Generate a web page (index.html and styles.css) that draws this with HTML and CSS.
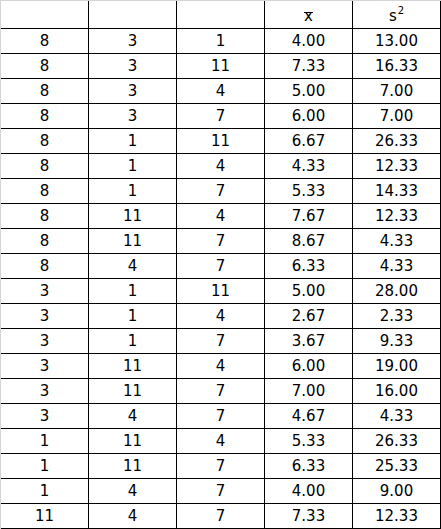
FILE: index.html
```html
<!DOCTYPE html>
<html>
<head>
<meta charset="utf-8">
<link rel="stylesheet" href="styles.css">
</head>
<body>
<div class="sheet">
  <div class="cell head"></div>
  <div class="cell head"></div>
  <div class="cell head"></div>
  <div class="cell head"><span class="xbar">x</span></div>
  <div class="cell head">s<sup class="sq">2</sup></div>

  <div class="cell">8</div><div class="cell">3</div><div class="cell">1</div><div class="cell">4.00</div><div class="cell">13.00</div>
  <div class="cell">8</div><div class="cell">3</div><div class="cell">11</div><div class="cell">7.33</div><div class="cell">16.33</div>
  <div class="cell">8</div><div class="cell">3</div><div class="cell">4</div><div class="cell">5.00</div><div class="cell">7.00</div>
  <div class="cell">8</div><div class="cell">3</div><div class="cell">7</div><div class="cell">6.00</div><div class="cell">7.00</div>
  <div class="cell">8</div><div class="cell">1</div><div class="cell">11</div><div class="cell">6.67</div><div class="cell">26.33</div>
  <div class="cell">8</div><div class="cell">1</div><div class="cell">4</div><div class="cell">4.33</div><div class="cell">12.33</div>
  <div class="cell">8</div><div class="cell">1</div><div class="cell">7</div><div class="cell">5.33</div><div class="cell">14.33</div>
  <div class="cell">8</div><div class="cell">11</div><div class="cell">4</div><div class="cell">7.67</div><div class="cell">12.33</div>
  <div class="cell">8</div><div class="cell">11</div><div class="cell">7</div><div class="cell">8.67</div><div class="cell">4.33</div>
  <div class="cell">8</div><div class="cell">4</div><div class="cell">7</div><div class="cell">6.33</div><div class="cell">4.33</div>
  <div class="cell">3</div><div class="cell">1</div><div class="cell">11</div><div class="cell">5.00</div><div class="cell">28.00</div>
  <div class="cell">3</div><div class="cell">1</div><div class="cell">4</div><div class="cell">2.67</div><div class="cell">2.33</div>
  <div class="cell">3</div><div class="cell">1</div><div class="cell">7</div><div class="cell">3.67</div><div class="cell">9.33</div>
  <div class="cell">3</div><div class="cell">11</div><div class="cell">4</div><div class="cell">6.00</div><div class="cell">19.00</div>
  <div class="cell">3</div><div class="cell">11</div><div class="cell">7</div><div class="cell">7.00</div><div class="cell">16.00</div>
  <div class="cell">3</div><div class="cell">4</div><div class="cell">7</div><div class="cell">4.67</div><div class="cell">4.33</div>
  <div class="cell">1</div><div class="cell">11</div><div class="cell">4</div><div class="cell">5.33</div><div class="cell">26.33</div>
  <div class="cell">1</div><div class="cell">11</div><div class="cell">7</div><div class="cell">6.33</div><div class="cell">25.33</div>
  <div class="cell">1</div><div class="cell">4</div><div class="cell">7</div><div class="cell">4.00</div><div class="cell">9.00</div>
  <div class="cell">11</div><div class="cell">4</div><div class="cell">7</div><div class="cell">7.33</div><div class="cell">12.33</div>
</div>
</body>
</html>
```

FILE: styles.css
```css
html, body {
  margin: 0;
  padding: 0;
  background: #ffffff;
}

.sheet {
  width: 440px;
  border-top: 1px solid #d4d4d4;
  border-left: 1px solid #d4d4d4;
  display: grid;
  grid-template-columns: repeat(5, 88px);
  grid-template-rows: 28px;
  grid-auto-rows: 25px;
  font-family: "DejaVu Sans", sans-serif;
  font-size: 15px;
  color: #000000;
}

.cell {
  box-sizing: border-box;
  border-right: 1px solid #000000;
  border-bottom: 1px solid #000000;
  text-align: center;
  line-height: 23px;
  padding-top: 1px;
  white-space: nowrap;
  overflow: hidden;
}

.cell.head {
  padding-top: 3px;
  line-height: 24px;
}

.xbar {
  position: relative;
  display: inline-block;
}

.xbar::after {
  content: "";
  position: absolute;
  left: 0;
  right: 0;
  top: 8px;
  height: 1px;
  background: #000000;
}

.sq {
  font-size: 10px;
  line-height: 0;
  vertical-align: 7px;
  margin-left: 1px;
}
```
